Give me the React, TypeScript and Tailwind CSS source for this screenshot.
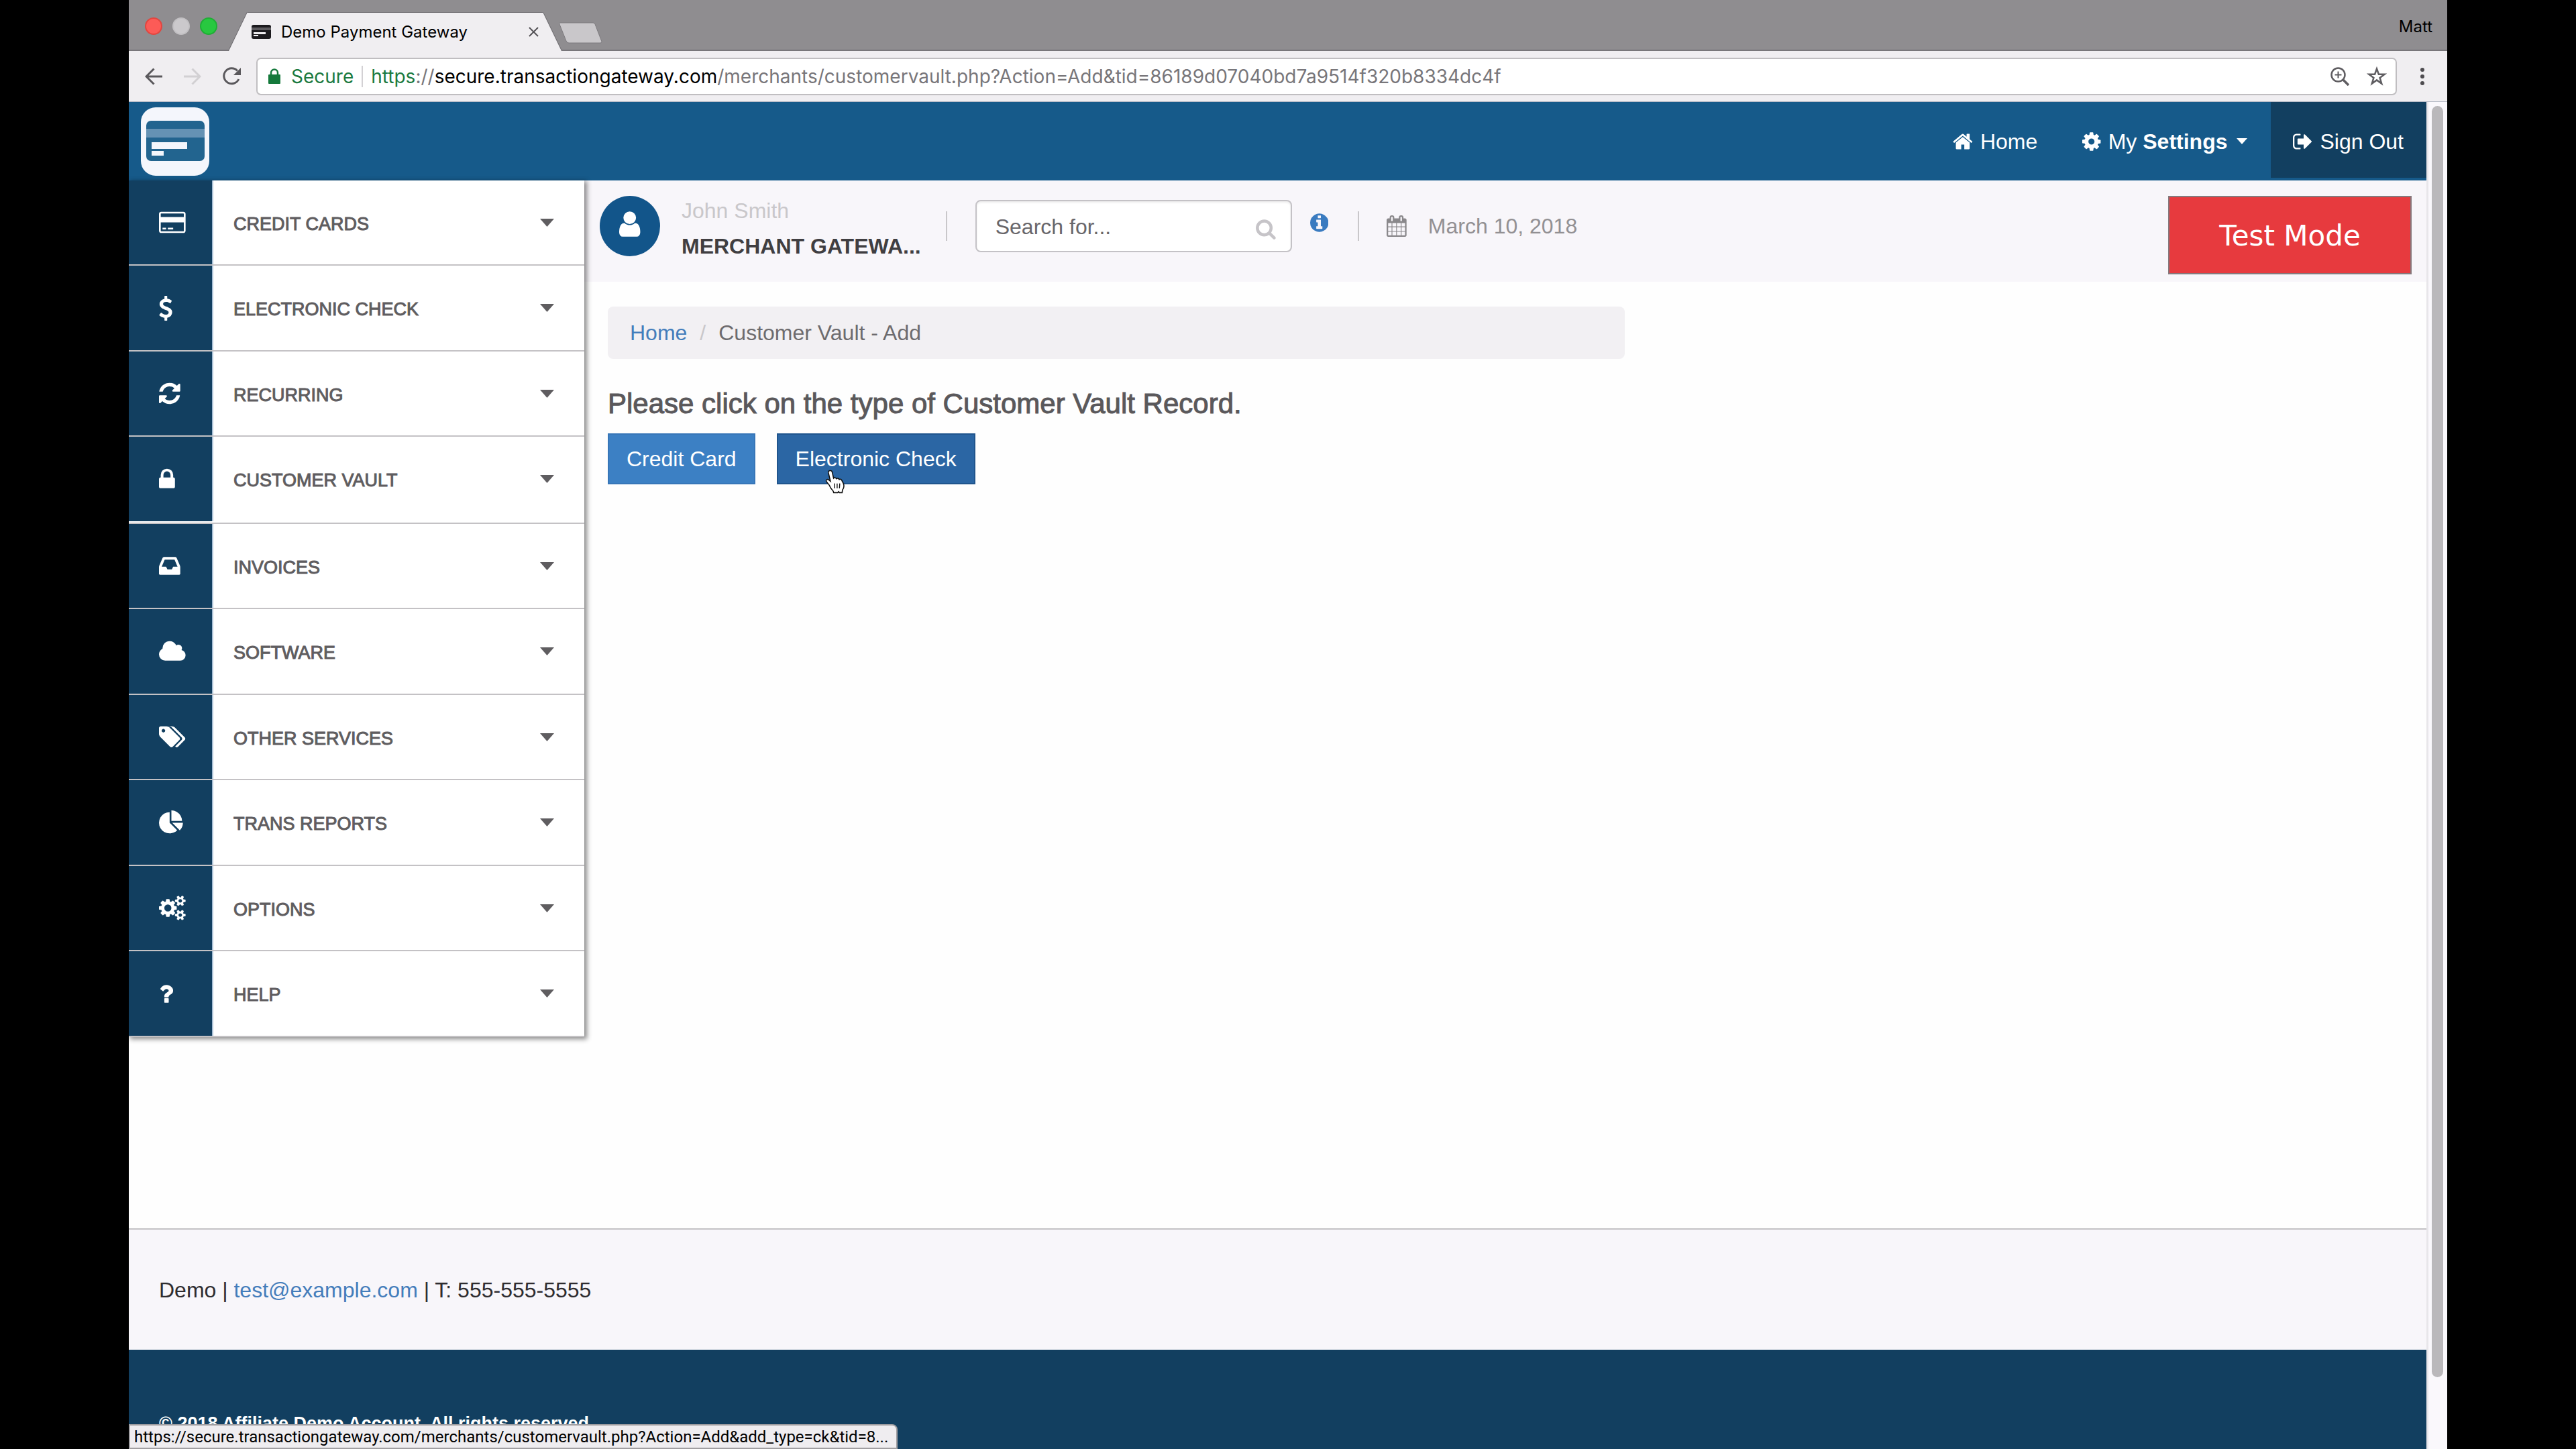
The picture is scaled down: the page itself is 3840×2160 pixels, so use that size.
import React from "react";

const glyphs = {
  card: { box: "0 0 1920 1792", d: "M1760 128q66 0 113 47t47 113v1216q0 66-47 113t-113 47h-1600q-66 0-113-47t-47-113v-1216q0-66 47-113t113-47h1600zm-1600 128q-13 0-22.5 9.5t-9.5 22.5v224h1664v-224q0-13-9.5-22.5t-22.5-9.5h-1600zm1600 1280q13 0 22.5-9.5t9.5-22.5v-608h-1664v608q0 13 9.5 22.5t22.5 9.5h1600zm-1504-128v-128h256v128h-256zm384 0v-128h384v128h-384z" },
  dollar: { box: "410 0 1024 1792", d: "M1362 1185q0 153-99.5 263.5t-258.5 136.5v175q0 14-9 23t-23 9h-135q-13 0-22.5-9.5t-9.5-22.5v-175q-66-9-127.5-31t-101.5-44.5-74-48-46.5-37.5-17.5-18q-17-21-2-41l103-135q7-10 23-12 15-2 24 9l2 2q113 99 243 125 37 8 74 8 81 0 142.5-43t61.5-122q0-28-15-53t-33.5-42-58.5-37.5-66-32-80-32.5q-39-16-61.5-25t-61.5-26.5-62.5-31-56.5-35.5-53.5-42.5-43.5-49-35.5-58-21-66.5-8.5-78q0-138 98-242t255-134v-180q0-13 9.5-22.5t22.5-9.5h135q14 0 23 9t9 23v176q57 6 110.5 23t87 33.5 63.5 37.5 39 29 15 14q17 18 5 38l-81 146q-8 15-23 16-14 3-27-7-3-3-14.5-12t-39-26.5-58.5-32-74.5-26-85.5-11.5q-95 0-155 43t-60 111q0 26 8.5 48t29.5 41.5 39.5 33 56 31 60.5 27 70 27.5q53 20 81 31.500t76 35 75.5 42.5 62 50 53 63.5 31.5 76.500 13 94z" },
  refresh: { box: "128 0 1536 1792", d: "M1639 1056q0 5-1 7-64 268-268 434.5t-478 166.5q-146 0-282.5-55t-243.5-157l-129 129q-19 19-45 19t-45-19-19-45v-448q0-26 19-45t45-19h448q26 0 45 19t19 45-19 45l-137 137q71 66 161 102t187 36q134 0 250-65t186-179q11-17 53-117 8-23 30-23h192q13 0 22.5 9.5t9.5 22.5zm25-800v448q0 26-19 45t-45 19h-448q-26 0-45-19t-19-45 19-45l138-138q-148-137-349-137-134 0-250 65t-186 179q-11 17-53 117-8 23-30 23h-199q-13 0-22.500-9.500t-9.500-22.500v-7q65-268 270-434.500t480-166.500q146 0 284 55.500t245 156.500l130-129q19-19 45-19t45 19 19 45z" },
  lock: { box: "320 0 1152 1792", d: "M640 768h512v-192q0-106-75-181t-181-75-181 75-75 181v192zm832 96v576q0 40-28 68t-68 28h-960q-40 0-68-28t-28-68v-576q0-40 28-68t68-28h32v-192q0-184 132-316t316-132 316 132 132 316v192h32q40 0 68 28t28 68z" },
  inbox: { box: "128 0 1536 1792", d: "M1151 960h316q-1-3-2.5-8.5t-2.5-7.5l-212-496h-708l-212 496q-1 3-2.5 8.5t-2.5 7.5h316l95 192h320zm513 30v482q0 26-19 45t-45 19h-1408q-26 0-45-19t-19-45v-482q0-62 25-123l238-552q10-25 36.5-42t52.5-17h832q26 0 52.5 17t36.5 42l238 552q25 61 25 123z" },
  cloud: { box: "64 0 1920 1792", d: "M1984 1152q0 159-112.5 271.5t-271.5 112.500h-1088q-185 0-316.500-131.500t-131.500-316.500q0-132 71-241.500t187-163.500q-2-28-2-43 0-212 150-362t362-150q158 0 286.500 88t187.500 230q70-62 166-62 106 0 181 75t75 181q0 75-41 138 129 30 213 134.500t84 239.500z" },
  tags: { box: "0 0 1920 1792", d: "M448 448q0-53-37.5-90.5t-90.5-37.5-90.5 37.5-37.5 90.5 37.5 90.5 90.5 37.5 90.5-37.5 37.5-90.5zm1067 576q0 53-37 90l-491 492q-39 37-91 37-53 0-90-37l-715-716q-38-37-64.5-101t-26.5-117v-416q0-52 38-90t90-38h416q53 0 117 26.5t102 64.5l715 714q37 39 37 91zm384 0q0 53-37 90l-491 492q-39 37-91 37-36 0-59-14t-53-45l470-470q37-37 37-90 0-52-37-91l-715-714q-38-38-102-64.5t-117-26.5h224q53 0 117 26.5t102 64.5l715 714q37 39 37 91z" },
  pie: { box: "0 0 1792 1792", d: "M768 890l546 546q-106 108-247.5 168t-298.5 60q-209 0-385.5-103t-279.5-279.5-103-385.5 103-385.5 279.5-279.5 385.5-103v762zm187 6h773q0 157-60 298.5t-168 247.5zm709-128h-768v-768q209 0 385.5 103t279.5 279.5 103 385.5z" },
  cogs: { box: "0 0 1920 1792", d: "M896 896q0-106-75-181t-181-75-181 75-75 181 75 181 181 75 181-75 75-181zm768 512q0-52-38-90t-90-38-90 38-38 90q0 53 37.5 90.5t90.5 37.5 90.5-37.5 37.5-90.5zm0-1024q0-52-38-90t-90-38-90 38-38 90q0 53 37.5 90.5t90.5 37.5 90.5-37.5 37.5-90.5zm-384 421v185q0 10-7 19.5t-16 10.5l-155 24q-11 35-32 76 34 48 90 115 7 11 7 20 0 12-7 19-23 30-82.5 89.5t-78.5 59.5q-11 0-21-7l-115-90q-37 19-77 31-11 108-23 155-7 24-30 24h-186q-11 0-20-7.5t-10-17.5l-23-153q-34-10-75-31l-118 89q-7 7-20 7-11 0-21-8-144-133-144-160 0-9 7-19 10-14 41-53t47-61q-23-44-35-82l-152-24q-10-1-17-9.5t-7-19.5v-185q0-10 7-19.5t16-10.5l155-24q11-35 32-76-34-48-90-115-7-11-7-20 0-12 7-20 22-30 82-89t79-59q11 0 21 7l115 90q34-18 77-32 11-108 23-154 7-24 30-24h186q11 0 20 7.5t10 17.5l23 153q34 10 75 31l118-89q8-7 20-7 11 0 21 8 144 133 144 160 0 8-7 19-12 16-42 54t-45 60q23 48 34 82l152 23q10 2 17 10.5t7 19.5zm640 533v140q0 16-149 31-12 27-30 52 51 113 51 138 0 4-4 7-122 71-124 71-8 0-46-47t-52-68q-20 2-30 2t-30-2q-14 21-52 68t-46 47q-2 0-124-71-4-3-4-7 0-25 51-138-18-25-30-52-149-15-149-31v-140q0-16 149-31 13-29 30-52-51-113-51-138 0-4 4-7 4-2 35-20t59-34 30-16q8 0 46 46.5t52 67.5q20-2 30-2t30 2q51-71 92-112l6-2q4 0 124 70 4 3 4 7 0 25-51 138 17 23 30 52 149 15 149 31zm0-1024v140q0 16-149 31-12 27-30 52 51 113 51 138 0 4-4 7-122 71-124 71-8 0-46-47t-52-68q-20 2-30 2t-30-2q-14 21-52 68t-46 47q-2 0-124-71-4-3-4-7 0-25 51-138-18-25-30-52-149-15-149-31v-140q0-16 149-31 13-29 30-52-51-113-51-138 0-4 4-7 4-2 35-20t59-34 30-16q8 0 46 46.5t52 67.5q20-2 30-2t30 2q51-71 92-112l6-2q4 0 124 70 4 3 4 7 0 25-51 138 17 23 30 52 149 15 149 31z" },
  question: { box: "384 0 1024 1792", d: "M1088 1256v240q0 16-12 28t-28 12h-240q-16 0-28-12t-12-28v-240q0-16 12-28t28-12h240q16 0 28 12t12 28zm316-600q0 54-15.5 101t-35 76.5-55 59.5-57.5 43.5-61 35.5q-41 23-68.5 65t-27.5 67q0 17-12 32.500t-28 15.500h-240q-15 0-25.500-18.500t-10.500-37.500v-45q0-83 65-156.500t143-108.500q59-27 84-56t25-76q0-42-46.500-74t-107.500-32q-65 0-108 29-35 25-107 115-13 16-31 16-12 0-25-8l-164-125q-13-10-15.500-25t5.500-28q160-266 464-266 80 0 161 31t146 83 106 127.500 41 158.500z" },
  home: { box: "64 0 1664 1792", d: "M1472 992v480q0 26-19 45t-45 19h-384v-384h-256v384h-384q-26 0-45-19t-19-45v-480q0-1 .5-3t.5-3l575-474 575 474q1 2 1 6zm223-69l-62 74q-8 9-21 11h-3q-13 0-21-7l-692-577-692 577q-12 8-24 7-13-2-21-11l-62-74q-8-10-7-23.5t11-21.5l719-599q32-26 76-26t76 26l244 204v-195q0-14 9-23t23-9h192q14 0 23 9t9 23v408l219 182q10 8 11 21.5t-7 23.5z" },
  cog: { box: "128 0 1536 1792", d: "M1152 896q0-106-75-181t-181-75-181 75-75 181 75 181 181 75 181-75 75-181zm512-109v222q0 12-8 23t-20 13l-185 28q-19 54-39 91 35 50 107 138 10 12 10 25t-9 23q-27 37-99 108t-94 71q-12 0-26-9l-138-108q-44 23-91 38-16 136-29 186-7 28-36 28h-222q-14 0-24.5-8.5t-11.5-21.5l-28-184q-49-16-90-37l-141 107q-10 9-25 9-14 0-25-11-126-114-165-168-7-10-7-23 0-12 8-23 15-21 51-66.5t54-70.5q-27-50-41-99l-183-27q-13-2-21-12.5t-8-23.5v-222q0-12 8-23t19-13l186-28q14-46 39-92-40-57-107-138-10-12-10-24 0-10 9-23 26-36 98.5-107.5t94.5-71.5q13 0 26 10l138 107q44-23 91-38 16-136 29-186 7-28 36-28h222q14 0 24.5 8.5t11.5 21.5l28 184q49 16 90 37l142-107q9-9 24-9 13 0 25 10 129 119 165 170 7 8 7 22 0 12-8 23-15 21-51 66.5t-54 70.5q26 50 41 98l183 28q13 2 21 12.5t8 23.5z" },
  signOut: { box: "64 0 1568 1792", d: "M704 1440q0 4 1 20t.5 26.5-3 23.5-10 19.5-20.5 6.5h-320q-119 0-203.5-84.5t-84.5-203.5v-704q0-119 84.5-203.5t203.5-84.5h320q13 0 22.5 9.5t9.5 22.5q0 4 1 20t.5 26.5-3 23.5-10 19.5-20.5 6.5h-320q-66 0-113 47t-47 113v704q0 66 47 113t113 47h312l11.5 1 11.5 3 8 5.5 7 9 2 13.5zm928-544q0 26-19 45l-544 544q-19 19-45 19t-45-19-19-45v-288h-448q-26 0-45-19t-19-45v-384q0-26 19-45t45-19h448v-288q0-26 19-45t45-19 45 19l544 544q19 19 19 45z" },
  user: { box: "256 0 1280 1792", d: "M1536 1399q0 109-62.5 187t-150.5 78h-854q-88 0-150.5-78t-62.5-187q0-85 8.5-160.5t31.5-152 58.5-131 94-89 134.5-34.5q131 128 313 128t313-128q76 0 134.5 34.5t94 89 58.5 131 31.5 152 8.5 160.5zm-256-887q0 159-112.5 271.5t-271.5 112.5-271.5-112.5-112.5-271.5 112.5-271.5 271.5-112.5 271.5 112.5 112.5 271.5z" },
  calendar: { box: "64 0 1664 1792", d: "M192 1664h288v-288h-288v288zm352 0h320v-288h-320v288zm-352-352h288v-320h-288v320zm352 0h320v-320h-320v320zm-352-384h288v-288h-288v288zm736 736h320v-288h-320v288zm-384-736h320v-288h-320v288zm768 736h288v-288h-288v288zm-384-352h320v-320h-320v320zm-352-864v-288q0-13-9.5-22.5t-22.5-9.5h-64q-13 0-22.5 9.5t-9.5 22.5v288q0 13 9.5 22.5t22.5 9.5h64q13 0 22.5-9.5t9.5-22.5zm736 864h288v-320h-288v320zm-384-384h320v-288h-320v288zm384 0h288v-288h-288v288zm32-480v-288q0-13-9.5-22.5t-22.5-9.5h-64q-13 0-22.5 9.5t-9.5 22.5v288q0 13 9.5 22.5t22.5 9.5h64q13 0 22.5-9.5t9.5-22.5zm384-64v1280q0 52-38 90t-90 38h-1408q-52 0-90-38t-38-90v-1280q0-52 38-90t90-38h128v-96q0-66 47-113t113-47h64q66 0 113 47t47 113v96h384v-96q0-66 47-113t113-47h64q66 0 113 47t47 113v96h128q52 0 90 38t38 90z" },
  info: { box: "128 0 1536 1792", d: "M1152 1376v-160q0-14-9-23t-23-9h-96v-512q0-14-9-23t-23-9h-320q-14 0-23 9t-9 23v160q0 14 9 23t23 9h96v320h-96q-14 0-23 9t-9 23v160q0 14 9 23t23 9h448q14 0 23-9t9-23zm-128-896v-160q0-14-9-23t-23-9h-192q-14 0-23 9t-9 23v160q0 14 9 23t23 9h192q14 0 23-9t9-23zm640 416q0 209-103 385.5t-279.5 279.5-385.5 103-385.5-103-279.5-279.5-103-385.5 103-385.5 279.5-279.5 385.5-103 385.5 103 279.5 279.5 103 385.5z" },
  search: { box: "64 0 1664 1792", d: "M1216 832q0-185-131.5-316.5t-316.5-131.5-316.5 131.5-131.5 316.5 131.5 316.5 316.5 131.5 316.5-131.5 131.5-316.5zm512 832q0 52-38 90t-90 38q-54 0-90-38l-343-342q-179 124-399 124-143 0-273.5-55.500t-225-150-150-225-55.500-273.500 55.500-273.500 150-225 225-150 273.500-55.500 273.500 55.500 225 150 150 225 55.500 273.500q0 220-124 399l343 343q37 37 37 90z" },
};

type GlyphName = keyof typeof glyphs;

function Glyph({ name, className }: { name: GlyphName; className: string }) {
  return (
    <svg viewBox={glyphs[name].box} className={`w-auto shrink-0 ${className}`} fill="currentColor" aria-hidden="true">
      <path d={glyphs[name].d} />
    </svg>
  );
}

function Caret({ className }: { className: string }) {
  return (
    <svg viewBox="0 0 20 12" preserveAspectRatio="none" className={className} fill="currentColor" aria-hidden="true">
      <path d="M0 0h20L10 12z" />
    </svg>
  );
}

function CardMark({ className }: { className: string }) {
  return (
    <svg viewBox="0 0 29 21" className={className} aria-hidden="true">
      <rect width="29" height="21" rx="3" fill="#1c1a1e" />
      <rect y="4" width="29" height="4" fill="#5c5a5e" />
      <rect x="3" y="11" width="18" height="3" fill="#f0eef1" />
      <rect x="3" y="15" width="7" height="2" fill="#f0eef1" />
    </svg>
  );
}

function TabStrip() {
  return (
    <div className="flex h-[76px] items-end border-b-2 border-[#78767a] bg-[#8f8d90]">
      <div className="flex h-full items-center gap-[15px] pt-1 pl-6">
        <button aria-label="Close window" className="size-[26px] rounded-full border-2 border-[#e2463f] bg-[#fc5b57]" />
        <button aria-label="Minimize window" className="size-[26px] rounded-full border-2 border-[#c2c0c3] bg-[#cbc9cc]" />
        <button aria-label="Zoom window" className="size-[26px] rounded-full border-2 border-[#1fae35] bg-[#28c840]" />
      </div>
      <div className="-mb-0.5 ml-4 h-[58px] w-[498px] bg-[#69676b] [clip-path:polygon(28px_0,470px_0,498px_100%,0_100%)]">
        <div className="mx-px flex h-full items-center border-t border-[#69676b] bg-[#f0eef1] px-[34px] [clip-path:polygon(28px_0,468px_0,496px_100%,0_100%)]">
          <CardMark className="h-[21px] w-[29px]" />
          <span className="ml-[15px] text-[24px] whitespace-nowrap text-black">Demo Payment Gateway</span>
          <button aria-label="Close tab" className="ml-auto">
            <svg viewBox="0 0 15 15" className="size-[15px]" stroke="#565458" strokeWidth="2" aria-hidden="true">
              <path d="M1 1l13 13M14 1L1 14" />
            </svg>
          </button>
        </div>
      </div>
      <button aria-label="New tab" className="-ml-1.5 self-center pt-6">
        <svg viewBox="0 0 66 32" className="h-8 w-[66px]" aria-hidden="true">
          <path d="M3 1h49q2 0 3 2l10 26q0 2-2 2H16q-3 0-4-3L2 3q-1-2 1-2z" fill="#c9c7ca" stroke="#7c7a7e" strokeWidth="1" />
        </svg>
      </button>
      <span className="ml-auto self-center pt-1.5 pr-[22px] text-[24px] text-black">Matt</span>
    </div>
  );
}

function Toolbar() {
  return (
    <div className="flex h-[76px] items-center border-b border-[#b4b9c4] bg-[#f0eef1] pl-6">
      <button aria-label="Back">
        <svg viewBox="0 0 26 26" className="size-[26px]" fill="none" stroke="#5a585c" strokeWidth="3" aria-hidden="true">
          <path d="M26 13H3M13.500 1.500L2 13l11.500 11.500" />
        </svg>
      </button>
      <button aria-label="Forward" className="ml-8">
        <svg viewBox="0 0 26 26" className="size-[26px]" fill="none" stroke="#d2d0d3" strokeWidth="3" aria-hidden="true">
          <path d="M0 13h23M12.500 1.500L24 13 12.500 24.500" />
        </svg>
      </button>
      <button aria-label="Reload" className="ml-[31px]">
        <svg viewBox="0 0 28 28" className="size-7" aria-hidden="true">
          <path d="M22.800 5.500A11.500 11.500 0 1 0 24.800 18" fill="none" stroke="#5a585c" strokeWidth="3" />
          <path d="M28 1v11H17z" fill="#5a585c" />
        </svg>
      </button>
      <div className="ml-[23px] flex h-14 flex-1 items-center rounded-[7px] border-2 border-[#c0bec1] bg-white pr-[13px] pl-4 text-[28px]">
        <svg viewBox="0 0 18 23" className="h-[23px] w-[18px]" aria-hidden="true">
          <rect y="9" width="18" height="14" rx="1" fill="#14793b" />
          <path d="M4 10V6.500a5 5 0 0 1 10 0V10" fill="none" stroke="#14793b" strokeWidth="2.500" />
        </svg>
        <span className="ml-4 text-[#1b7a40]">Secure</span>
        <span className="mx-3 h-8 w-0.5 bg-[#d3d1d4]" />
        <span role="textbox" aria-label="Address" className="whitespace-nowrap text-[#78767a]">
          <span className="text-[#1b7a40]">https</span>://<span className="text-black">secure.transactiongateway.com</span>
          /merchants/customervault.php?Action=Add&amp;tid=86189d07040bd7a9514f320b8334dc4f
        </span>
        <button aria-label="Page zoom" className="ml-auto">
          <svg viewBox="0 0 28 28" className="size-7" fill="none" stroke="#5f5d61" aria-hidden="true">
            <circle cx="11.500" cy="11.500" r="10" strokeWidth="2.500" />
            <path d="M19 19l8 8" strokeWidth="3.500" />
            <path d="M11.500 6.500v10M6.500 11.500h10" strokeWidth="2" />
          </svg>
        </button>
        <button aria-label="Bookmark this page" className="ml-[26px]">
          <svg viewBox="0 0 30 30" className="size-[30px]" fill="none" stroke="#5f5d61" strokeWidth="2.500" aria-hidden="true">
            <path d="M15 3.500l2.900 8.200h8.700l-7 5.200 2.600 8.700-7.200-5.200-7.200 5.200 2.600-8.700-7-5.200h8.700z" />
          </svg>
        </button>
      </div>
      <button aria-label="Menu" className="flex w-[75px] flex-col items-center gap-1">
        <span className="size-1.5 rounded-full bg-[#4e4c50]" />
        <span className="size-1.5 rounded-full bg-[#4e4c50]" />
        <span className="size-1.5 rounded-full bg-[#4e4c50]" />
      </button>
    </div>
  );
}

function SiteHeader() {
  return (
    <header className="flex h-[117px] items-center bg-[#165a8a] pl-[18px] text-[32px] text-white">
      <a href="#home" aria-label="Gateway home">
        <svg viewBox="0 0 102 102" className="size-[102px]" aria-hidden="true">
          <rect width="102" height="102" rx="22" fill="#f4f6fc" />
          <rect x="8" y="20" width="87" height="60" rx="7" fill="#22648f" />
          <rect x="8" y="32" width="87" height="13" fill="#6592b4" />
          <rect x="16" y="52" width="53" height="10" fill="#f4f6fc" />
          <rect x="16" y="65" width="18" height="7" fill="#f4f6fc" />
        </svg>
      </a>
      <nav className="ml-auto flex h-full items-center">
        <a href="#home" className="flex items-center gap-[11px]">
          <Glyph name="home" className="h-8" />
          Home
        </a>
        <button className="mr-[35px] ml-[67px] flex items-center">
          <Glyph name="cog" className="h-8" />
          <span className="ml-[11px]">
            My <b>Settings</b>
          </span>
          <Caret className="ml-3.5 h-[9px] w-4" />
        </button>
        <a href="#signout" className="flex h-[113px] items-center gap-3 self-start bg-[#123f60] pt-1 pr-[34px] pl-[33px]">
          <Glyph name="signOut" className="h-8" />
          Sign Out
        </a>
      </nav>
    </header>
  );
}

const menu: { label: string; icon: GlyphName; open?: boolean }[] = [
  { label: "CREDIT CARDS", icon: "card" },
  { label: "ELECTRONIC CHECK", icon: "dollar" },
  { label: "RECURRING", icon: "refresh" },
  { label: "CUSTOMER VAULT", icon: "lock", open: true },
  { label: "INVOICES", icon: "inbox" },
  { label: "SOFTWARE", icon: "cloud" },
  { label: "OTHER SERVICES", icon: "tags" },
  { label: "TRANS REPORTS", icon: "pie" },
  { label: "OPTIONS", icon: "cogs" },
  { label: "HELP", icon: "question" },
];

function Sidebar() {
  return (
    <aside className="z-10 w-[679px] shrink-0 self-start bg-white shadow-[3px_2px_7px_1px_rgba(0,0,0,0.45)]">
      <ul>
        {menu.map((item) => (
          <li key={item.label} className={`border-b-2 border-[#c4c2c5] ${item.open ? "pb-0.5" : ""}`}>
            <button className="flex w-full items-stretch text-left in-[li:nth-child(even)]:h-[126px] in-[li:nth-child(odd)]:h-[125px]">
              <span className="flex w-[126px] shrink-0 items-center border-r-2 border-[#a9c0d6] bg-[#123f60] pl-[45px] text-white">
                <Glyph name={item.icon} className="h-[37px]" />
              </span>
              <span className="flex flex-1 items-center justify-between pr-[45px] pl-[30px] text-[27px] text-[#5f5d60]">
                <span className="pt-[5px] [-webkit-text-stroke:1px_#5f5d60]">{item.label}</span>
                <Caret className="h-3 w-[21px]" />
              </span>
            </button>
          </li>
        ))}
      </ul>
    </aside>
  );
}

function InfoBar() {
  return (
    <div className="flex justify-between bg-[#f8f6fa] pr-[22px] pl-[23px] text-[32px]">
      <div className="mb-[15px] flex h-[136px] items-center whitespace-nowrap">
        <span className="flex size-[90px] items-center justify-center rounded-full bg-[#12558a] pb-1.5 text-white">
          <Glyph name="user" className="h-11" />
        </span>
        <div className="ml-8 pt-2 leading-[53px]">
          <p className="text-[#c9c7ca]">John Smith</p>
          <p className="font-bold text-[#403e41]">MERCHANT GATEWA...</p>
        </div>
        <span className="mr-[42px] ml-[37px] h-11 w-0.5 bg-[#c9c7ca]" />
        <div className="relative">
          <input
            aria-label="Search"
            placeholder="Search for..."
            className="h-[78px] w-[472px] rounded-lg border-2 border-[#c4c2c6] bg-white pt-0.5 pl-7 text-[#68666a] shadow-[inset_0_2px_3px_rgba(0,0,0,0.08)] placeholder:text-[#68666a] placeholder:opacity-100"
          />
          <button aria-label="Run search" className="absolute top-[27px] right-6 text-[#c6c4c8]">
            <Glyph name="search" className="h-8" />
          </button>
        </div>
        <a href="#search-help" aria-label="Search help" className="ml-[27px] pb-2.5 text-[#3a7bc0]">
          <Glyph name="info" className="h-8" />
        </a>
        <span className="mr-[41px] ml-11 h-11 w-0.5 bg-[#c9c7ca]" />
        <Glyph name="calendar" className="h-8 text-[#8a888b]" />
        <span className="ml-8 text-[#929093]">March 10, 2018</span>
      </div>
      <div className="mt-[23px] flex h-[117px] w-[363px] items-center justify-center border-2 border-[#85797d] bg-[#e73a3e] pt-0.5 font-['DejaVu_Sans',sans-serif] text-[42px] text-white">
        Test Mode
      </div>
    </div>
  );
}

function Content() {
  return (
    <main className="pt-[37px] pl-[35px] text-[32px]">
      <nav aria-label="Breadcrumb" className="flex h-[78px] max-w-[1516px] items-center rounded-lg bg-[#f2f0f3] pl-[33px]">
        <a href="#home" className="text-[#447dbb]">
          Home
        </a>
        <span className="mx-[19px] text-[#c9c7ca]">/</span>
        <span className="text-[#6d6b6e]">Customer Vault - Add</span>
      </nav>
      <h1 className="mt-[37px] text-[42px] leading-[60px] text-[#5a585b] [-webkit-text-stroke:1px_#5a585b]">
        Please click on the type of Customer Vault Record.
      </h1>
      <div className="mt-3.5 flex gap-8 text-white">
        <button className="h-[76px] border-2 border-[#3776b8] bg-[#3c80c4] px-[26px]">Credit Card</button>
        <div className="relative">
          <button className="h-[76px] border-2 border-[#20558d] bg-[#2b66a4] px-[26px]">Electronic Check</button>
          <svg viewBox="0 0 32 34" className="absolute top-[54px] left-[71px] h-[36px] w-[34px]" aria-hidden="true">
            <path
              d="M7.500 1.500c1.800-.4 3 .6 3.400 2.400l1.900 8.200c.9-1 3.200-.9 4 .8 1-1 3.300-.7 4 1 1.200-.8 3.200-.2 3.700 1.600l2.300 4.500c1 3 .4 6-1.400 8.500l-.6 4h-4l-.8-1.500-1.500 1.500h-5.500l-1-2.500c-2-2-4-4.500-5-7.500-.8-2-3.500-4-4.500-6-.8-2 1.500-3.300 3.200-2.200l2.700 2.200L5.500 4.700c-.3-1.500.6-2.900 2-3.200z"
              fill="#fff"
              stroke="#111"
              strokeWidth="1.500"
            />
            <path d="M14 19.500l.5 7M17.800 19.500v7M21.500 19.500l-.5 7" stroke="#111" strokeWidth="1.300" />
          </svg>
        </div>
      </div>
    </main>
  );
}

function Footer() {
  return (
    <footer>
      <div className="flex h-[181px] items-center border-t-2 border-[#c4c2c5] bg-[#f8f6fa] pl-[45px] text-[32px] whitespace-pre text-[#2e2c2f]">
        Demo | <a href="mailto:test@example.com" className="text-[#447dbb]">test@example.com</a> | T: 555-555-5555
      </div>
      <div className="h-[148px] bg-[#123f60] pt-[95px] pl-[45px] text-[27px] leading-[30px] font-bold text-white">
        © 2018 Affiliate Demo Account. All rights reserved.
      </div>
    </footer>
  );
}

export default function App() {
  return (
    <div className="h-screen bg-black px-48">
      <div className="relative flex h-full flex-col overflow-hidden bg-white font-['Inter',sans-serif]">
        <TabStrip />
        <Toolbar />
        <div className="flex min-h-0 flex-1 font-['Liberation_Sans',Arial,sans-serif]">
          <div className="flex min-w-0 flex-1 flex-col bg-[#fefefe]">
            <SiteHeader />
            <div className="flex min-h-0 flex-1">
              <Sidebar />
              <div className="min-w-0 flex-1">
                <InfoBar />
                <Content />
              </div>
            </div>
            <Footer />
          </div>
          <div className="flex w-[31px] shrink-0 border-l-[3px] border-[#e8e6ea] bg-[#faf8fc] pt-1.5 pr-1.5 pb-[107px] pl-[5px]">
            <div className="flex-1 rounded-full bg-[#bab8bb]" />
          </div>
        </div>
        <div className="absolute bottom-0 left-0 flex h-[37px] items-center rounded-tr-lg border-2 border-[#a09ea1] bg-[#efedf0] pr-3 pl-1.5 font-['Roboto',sans-serif] text-[24px] text-black">
          https://secure.transactiongateway.com/merchants/customervault.php?Action=Add&amp;add_type=ck&amp;tid=8...
        </div>
      </div>
    </div>
  );
}
